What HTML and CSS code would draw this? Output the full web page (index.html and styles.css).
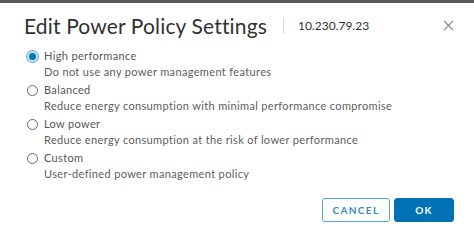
FILE: index.html
```html
<!DOCTYPE html>
<html lang="en">
<head>
    <meta charset="UTF-8">
    <title>Edit Power Policy Settings</title>
    <link rel="stylesheet" href="styles.css">
</head>
<body>
    <div class="modal">
        <div class="modal-header">
            <h2 class="modal-title">Edit Power Policy Settings</h2>
            <span class="divider"></span>
            <span class="host">10.230.79.23</span>
            <button class="close-btn" aria-label="Close">
                <svg width="11" height="11" viewBox="0 0 11 11">
                    <path d="M1 1 L10 10 M10 1 L1 10" stroke="#8c8c8c" stroke-width="1.2" fill="none"/>
                </svg>
            </button>
        </div>
        <form class="policy-list">
            <label class="policy">
                <input type="radio" name="policy" checked>
                <span class="radio-dot"></span>
                <span class="policy-name">High performance</span>
                <span class="policy-desc">Do not use any power management features</span>
            </label>
            <label class="policy">
                <input type="radio" name="policy">
                <span class="radio-dot"></span>
                <span class="policy-name">Balanced</span>
                <span class="policy-desc">Reduce energy consumption with minimal performance compromise</span>
            </label>
            <label class="policy">
                <input type="radio" name="policy">
                <span class="radio-dot"></span>
                <span class="policy-name">Low power</span>
                <span class="policy-desc">Reduce energy consumption at the risk of lower performance</span>
            </label>
            <label class="policy">
                <input type="radio" name="policy">
                <span class="radio-dot"></span>
                <span class="policy-name">Custom</span>
                <span class="policy-desc">User-defined power management policy</span>
            </label>
        </form>
        <div class="modal-footer">
            <button class="btn btn-outline">CANCEL</button>
            <button class="btn btn-primary">OK</button>
        </div>
    </div>
</body>
</html>
```

FILE: styles.css
```css
* {
    margin: 0;
    padding: 0;
    box-sizing: border-box;
}

body {
    font-family: 'Lato', 'Open Sans', sans-serif;
    background-color: #ffffff;
    color: #565656;
    width: 474px;
    height: 238px;
    overflow: hidden;
}

.modal {
    border-top: 3px solid #5a5a5a;
    height: 238px;
    padding: 0 20px 0 24px;
}

.modal-header {
    display: flex;
    align-items: center;
    height: 45px;
}

.modal-title {
    font-size: 21px;
    font-weight: 400;
    color: #313131;
    letter-spacing: 0.15px;
}

.divider {
    width: 1px;
    height: 16px;
    background-color: #dcdcdc;
    margin: 0 14px 0 16px;
}

.host {
    font-size: 12px;
    color: #313131;
}

.close-btn {
    margin-left: auto;
    background: none;
    border: none;
    display: flex;
    padding: 0;
}

.policy-list {
    padding-top: 0;
}

.policy {
    display: grid;
    grid-template-columns: 17px 1fr;
    align-items: center;
    padding-left: 3px;
    font-size: 11px;
    line-height: 16px;
    letter-spacing: 0.35px;
}

.policy input {
    display: none;
}

.radio-dot {
    width: 11px;
    height: 11px;
    border: 1px solid #6a6a6a;
    border-radius: 50%;
    background-color: #fff;
}

.policy input:checked + .radio-dot {
    border: 2px solid #c5dff0;
    background-color: #0079b8;
    box-shadow: 0 0 0 1px #6ea9d3;
}

.policy-name {
    color: #565656;
}

.policy-desc {
    grid-column: 2;
    margin-bottom: 2px;
    color: #5d5d5d;
}

.modal-footer {
    display: flex;
    justify-content: flex-end;
    gap: 4px;
    margin-top: 14px;
}

.btn {
    height: 24px;
    font-family: 'Lato', sans-serif;
    font-size: 10px;
    font-weight: 700;
    letter-spacing: 1.4px;
    border-radius: 3px;
    cursor: pointer;
}

.btn-outline {
    width: 68px;
    background-color: #fff;
    border: 1px solid #5aa0cc;
    color: #3d88bd;
}

.btn-primary {
    width: 60px;
    background-color: #0072b5;
    border: 1px solid #0072b5;
    color: #fff;
}
```
